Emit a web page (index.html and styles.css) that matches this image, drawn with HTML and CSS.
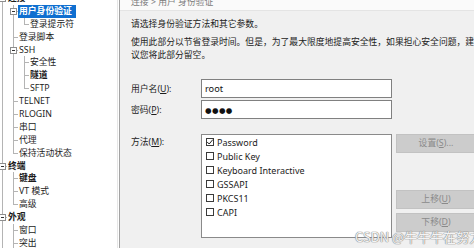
FILE: index.html
```html
<!DOCTYPE html>
<html lang="zh-CN">
<head>
<meta charset="utf-8">
<title>用户身份验证</title>
<link rel="stylesheet" href="styles.css">
</head>
<body>
<div class="app">
  <nav class="treepane">
    <ul class="tree">
      <li class="node"><div class="row"><span class="tbox"></span><span class="lbl b">连接</span></div>
        <ul>
          <li class="node"><div class="row"><span class="tbox"></span><span class="lbl sel">用户身份验证</span></div>
            <ul>
              <li class="node last"><div class="row"><span class="lbl">登录提示符</span></div></li>
            </ul>
          </li>
          <li class="node"><div class="row"><span class="lbl">登录脚本</span></div></li>
          <li class="node"><div class="row"><span class="tbox"></span><span class="lbl">SSH</span></div>
            <ul>
              <li class="node"><div class="row"><span class="lbl">安全性</span></div></li>
              <li class="node"><div class="row"><span class="lbl b">隧道</span></div></li>
              <li class="node last"><div class="row"><span class="lbl">SFTP</span></div></li>
            </ul>
          </li>
          <li class="node"><div class="row"><span class="lbl">TELNET</span></div></li>
          <li class="node"><div class="row"><span class="lbl">RLOGIN</span></div></li>
          <li class="node"><div class="row"><span class="lbl">串口</span></div></li>
          <li class="node"><div class="row"><span class="lbl">代理</span></div></li>
          <li class="node last"><div class="row"><span class="lbl">保持活动状态</span></div></li>
        </ul>
      </li>
      <li class="node"><div class="row"><span class="tbox"></span><span class="lbl b">终端</span></div>
        <ul>
          <li class="node"><div class="row"><span class="lbl b">键盘</span></div></li>
          <li class="node"><div class="row"><span class="lbl">VT 模式</span></div></li>
          <li class="node last"><div class="row"><span class="lbl">高级</span></div></li>
        </ul>
      </li>
      <li class="node"><div class="row"><span class="tbox"></span><span class="lbl b">外观</span></div>
        <ul>
          <li class="node"><div class="row"><span class="lbl">窗口</span></div></li>
          <li class="node"><div class="row"><span class="lbl">突出</span></div></li>
        </ul>
      </li>
    </ul>
  </nav>

  <main class="content">
    <div class="crumb">连接 &gt; 用户 身份验证</div>
    <p class="desc first">请选择身份验证方法和其它参数。</p>
    <p class="desc">使用此部分以节省登录时间。但是，为了最大限度地提高安全性，如果担心安全问题，建<br>议您将此部分留空。</p>

    <div class="form">
      <div class="frow">
        <label class="flabel">用户名(<u>U</u>):</label>
        <div class="field">root</div>
      </div>
      <div class="frow second">
        <label class="flabel">密码(<u>P</u>):</label>
        <div class="field pw"><span class="dots">●●●●</span></div>
      </div>
      <div class="mrow">
        <label class="flabel mlabel">方法(<u>M</u>):</label>
        <div class="listbox">
          <div class="item"><span class="cb"><svg width="8" height="8" viewBox="0 0 8 8"><polyline points="1.2,4 3.2,6 6.8,1.6" fill="none" stroke="#222" stroke-width="1"/></svg></span>Password</div>
          <div class="item"><span class="cb"></span>Public Key</div>
          <div class="item"><span class="cb"></span>Keyboard Interactive</div>
          <div class="item"><span class="cb"></span>GSSAPI</div>
          <div class="item"><span class="cb"></span>PKCS11</div>
          <div class="item"><span class="cb"></span>CAPI</div>
        </div>
        <div class="btncol">
          <div class="btn">设置(<u>S</u>)...</div>
          <div class="btn up">上移(<u>U</u>)</div>
          <div class="btn down">下移(<u>D</u>)</div>
        </div>
      </div>
    </div>
  </main>
  <div class="watermark">CSDN @牛牛牛在努力</div>
</div>
</body>
</html>
```

FILE: styles.css
```css
* { box-sizing: border-box; }
html, body { margin: 0; padding: 0; }
body {
  width: 474px;
  height: 248px;
  overflow: hidden;
  background: #ffffff;
  font-family: "Noto Sans", "Noto Sans CJK SC", sans-serif;
  font-size: 8.8px;
  color: #1c1c1c;
}
.app {
  position: relative;
  display: flex;
  width: 474px;
  height: 248px;
  overflow: hidden;
}

/* ---------- tree ---------- */
.treepane {
  width: 118px;
  flex: none;
  background: #ffffff;
  border-right: 1px solid #e6e6e6;
  overflow: hidden;
}
.tree, .tree ul {
  list-style: none;
  margin: 0;
}
.tree {
  padding: 0 0 0 2px;
  margin-top: -8px;
}
.tree ul { padding: 0 0 0 11px; }
.node { position: relative; }
.node::before {
  content: "";
  position: absolute;
  left: 0;
  top: 0;
  bottom: 0;
  border-left: 1px solid #b4b4b4;
}
.node.last::before { bottom: auto; height: 6.5px; }
.row {
  position: relative;
  height: 12.9px;
  line-height: 12.9px;
  padding-left: 6px;
  white-space: nowrap;
}
.row::before {
  content: "";
  position: absolute;
  left: 0;
  top: 6px;
  width: 5px;
  border-top: 1px solid #b4b4b4;
}
.tbox {
  position: absolute;
  left: -3px;
  top: 3px;
  width: 7px;
  height: 7px;
  background: #fff;
  border: 1px solid #8e8e8e;
  z-index: 1;
}
.tbox::after {
  content: "";
  position: absolute;
  left: 1px;
  top: 2px;
  width: 3px;
  border-top: 1px solid #333;
}
.lbl { display: inline-block; }
.lbl.b { font-weight: 700; }
.lbl.sel {
  background: #0f6fd0;
  color: #fff;
  font-weight: 700;
  margin-left: -1px;
  padding: 0 4px 0 1px;
}

/* ---------- content ---------- */
.content {
  flex: 1;
  margin-left: 1px;
  background: #f0f0f0;
  border-left: 1px solid #a3a3a3;
  display: flex;
  flex-direction: column;
  overflow: hidden;
  min-width: 0;
}
.crumb {
  height: 11px;
  flex: none;
  background: #fafafa;
  border-bottom: 1px solid #e4e4e4;
  line-height: 4px;
  padding-left: 11px;
  color: #7a7a7a;
  white-space: nowrap;
}
.desc {
  margin: 5px 0 0 0;
  padding-left: 11px;
  line-height: 13px;
  white-space: nowrap;
  color: #222;
}
.desc.first { margin-top: 6.5px; }

.form {
  margin-top: 17.5px;
  padding-left: 11px;
}
.frow {
  display: flex;
  align-items: center;
  height: 19px;
}
.frow.second { margin-top: 2px; }
.flabel {
  width: 70px;
  flex: none;
  color: #1c1c1c;
}
.field {
  width: 191px;
  height: 19px;
  background: #fff;
  border: 1px solid #808080;
  padding-left: 3px;
  line-height: 17px;
  font-size: 9.2px;
  color: #111;
}
.dots {
  font-family: "DejaVu Sans", sans-serif;
  font-size: 7.5px;
  letter-spacing: 0.4px;
  color: #111;
}
.mrow {
  display: flex;
  align-items: flex-start;
  margin-top: 15px;
}
.mlabel { line-height: 16px; }
.listbox {
  width: 191px;
  height: 104px;
  flex: none;
  background: #fff;
  border: 1px solid #8a8a8a;
  padding-top: 0;
}
.item {
  display: flex;
  align-items: center;
  height: 14px;
  padding-left: 4px;
  white-space: nowrap;
  color: #1c1c1c;
  font-size: 9px;
}
.cb {
  width: 8px;
  height: 8px;
  flex: none;
  border: 1px solid #3a3a3a;
  background: #fff;
  margin-right: 3px;
  position: relative;
}
.cb svg { position: absolute; left: -1px; top: -1px; }
.btncol {
  margin-left: 4px;
  width: 80px;
  flex: none;
  display: flex;
  flex-direction: column;
}
.btn {
  height: 19px;
  background: #cccccc;
  border: 1px solid #c2c2c2;
  color: #8a8a8a;
  text-align: center;
  line-height: 17px;
  white-space: nowrap;
}
.btn.up { margin-top: 37px; }
.btn.down { margin-top: 4px; }

.watermark {
  position: absolute;
  left: 355px;
  top: 228px;
  font-family: "Noto Sans CJK SC", sans-serif;
  font-size: 13px;
  line-height: 17px;
  color: rgba(255, 255, 255, 0.92);
  white-space: nowrap;
  text-shadow: 0 0 1px #8a8a8a, 0 0 1px #8a8a8a, 0 0 1px #8a8a8a;
}
```
